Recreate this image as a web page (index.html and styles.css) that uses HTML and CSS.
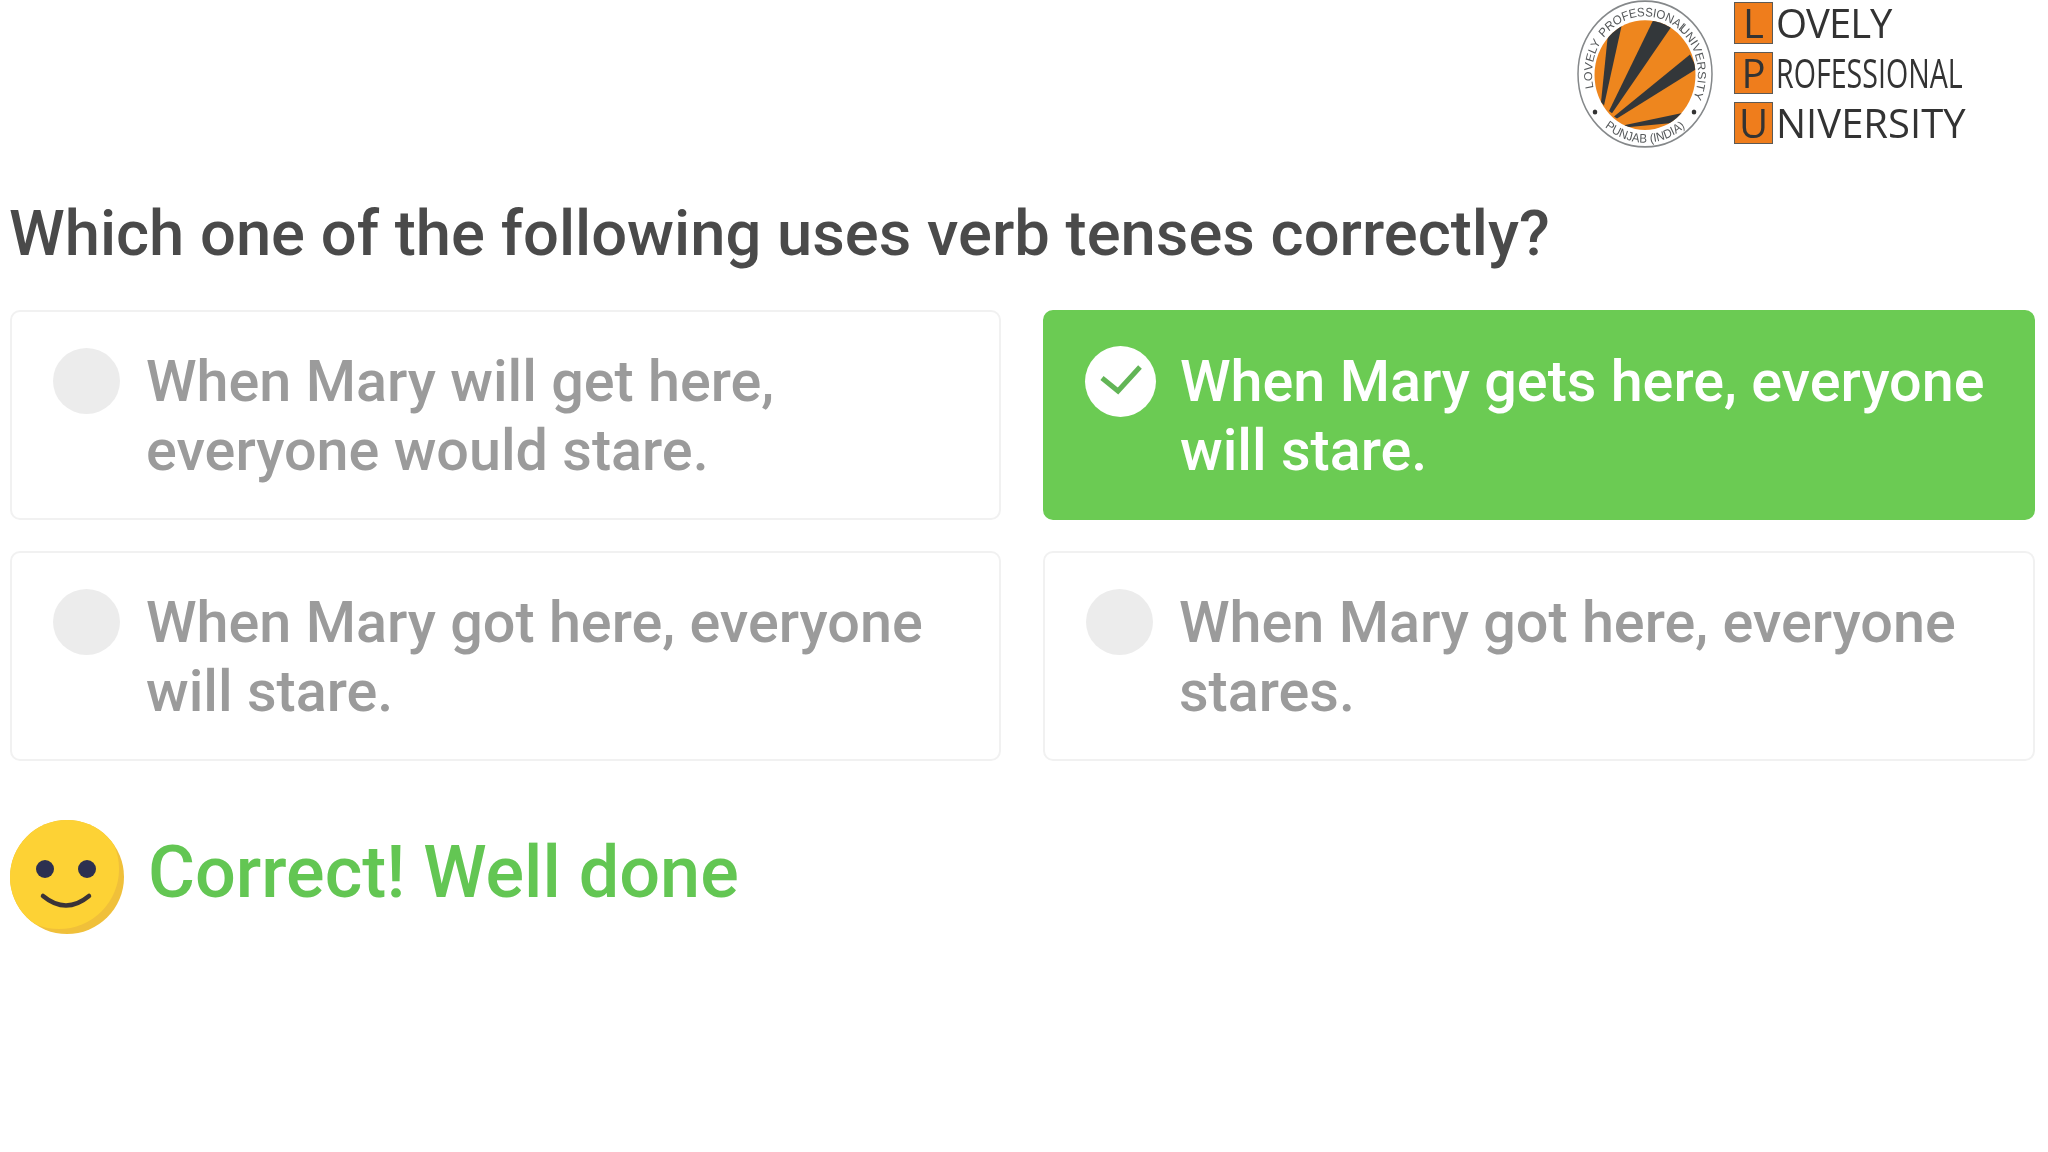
FILE: index.html
```html
<!DOCTYPE html>
<html lang="en">
<head>
<meta charset="utf-8">
<title>Quiz</title>
<link rel="stylesheet" href="styles.css">
</head>
<body>
<main class="page">
  <header class="brand">
    <svg class="seal" viewBox="0 0 136 136" width="136" height="148" preserveAspectRatio="none" aria-hidden="true">
      <defs>
        <path id="sealTop" d="M18.200 86.100 A53 53 0 1 1 108.600 102.100"/>
        <path id="sealBottom" d="M19.700 108.500 A63 63 0 0 0 116.300 108.500"/>
        <clipPath id="discClip"><circle cx="68" cy="69" r="50.500"/></clipPath>
      </defs>
      <circle cx="68" cy="68" r="67" fill="#fff" stroke="#85888a" stroke-width="1.500"/>
      <circle cx="68" cy="69" r="50.500" fill="#ee861e"/>
      <g clip-path="url(#discClip)" fill="#33373a">
        <path d="M32 22 L45 22 L27 97 L24 94Z"/>
        <path d="M77 17 L94 25 L35 104 L32 102Z"/>
        <path d="M113 50 L120 63 L40 109 L37 107Z"/>
        <path d="M110 103 L106 112 L50 117 L47 115Z"/>
      </g>
      <text class="seal-text"><textPath href="#sealTop" startOffset="12.500%" text-anchor="middle">LOVELY</textPath></text>
      <text class="seal-text"><textPath href="#sealTop" startOffset="44.600%" text-anchor="middle">PROFESSIONAL</textPath></text>
      <text class="seal-text"><textPath href="#sealTop" startOffset="78%" text-anchor="middle">UNIVERSITY</textPath></text>
      <text class="seal-text"><textPath href="#sealBottom" startOffset="50%" text-anchor="middle">PUNJAB (INDIA)</textPath></text>
      <circle cx="18" cy="103" r="2.300" fill="#333"/>
      <circle cx="117" cy="103" r="2.300" fill="#333"/>
    </svg>
    <div class="wordmark">
      <div class="word"><span class="initial">L</span><span class="rest rest-l">OVELY</span></div>
      <div class="word"><span class="initial">P</span><span class="rest rest-p">ROFESSIONAL</span></div>
      <div class="word"><span class="initial">U</span><span class="rest rest-u">NIVERSITY</span></div>
    </div>
  </header>

  <h1 class="question">Which one of the following uses verb tenses correctly?</h1>

  <section class="options">
    <div class="option"><span class="radio"></span><p class="label">When Mary will get here, everyone would stare.</p></div>
    <div class="option option-correct">
      <span class="radio radio-checked">
        <svg viewBox="0 0 71 71" width="71" height="71" aria-hidden="true"><path d="M17 32 L33 45 L55 21" fill="none" stroke="#62b556" stroke-width="5"/></svg>
      </span>
      <p class="label">When Mary gets here, everyone will stare.</p>
    </div>
    <div class="option"><span class="radio"></span><p class="label">When Mary got here, everyone will stare.</p></div>
    <div class="option"><span class="radio"></span><p class="label">When Mary got here, everyone stares.</p></div>
  </section>

  <section class="feedback">
    <svg class="smiley" viewBox="0 0 116 116" width="116" height="116" aria-hidden="true">
      <defs><clipPath id="faceClip"><circle cx="58" cy="58" r="57"/></clipPath></defs>
      <circle cx="58" cy="58" r="57" fill="#f0c03a"/>
      <circle cx="50" cy="50" r="60" fill="#fdd235" clip-path="url(#faceClip)"/>
      <circle cx="36" cy="50" r="9" fill="#2c3050"/>
      <circle cx="78" cy="50" r="9" fill="#2c3050"/>
      <path d="M34 77 Q57 96 80 77" fill="none" stroke="#3a3338" stroke-width="4.500" stroke-linecap="round"/>
    </svg>
    <span class="message">Correct! Well done</span>
  </section>
</main>
</body>
</html>
```
FILE: styles.css
```css
* { box-sizing: border-box; }
html, body { margin: 0; padding: 0; background: #fff; }
body { font-family: Roboto, "Noto Sans", sans-serif; width: 2048px; height: 1152px; overflow: hidden; }
.page { padding: 0 13px 0 10px; }

.brand { display: flex; justify-content: flex-end; align-items: flex-start; gap: 21px; padding-right: 63px; height: 151px; filter: blur(0.5px); }
.seal { flex: none; }
.seal-text { font-family: "Liberation Sans Narrow", "Liberation Sans", sans-serif; font-size: 11.500px; fill: #55585a; }

.wordmark { display: flex; flex-direction: column; gap: 8px; padding-top: 2px; width: 238px; }
.word { display: flex; align-items: center; height: 42px; }
.initial { flex: none; width: 39px; height: 42px; background: #ef7d1c; border: 1px solid #5c5a55; color: #333; font: 400 40px/40px "Open Sans", sans-serif; text-align: center; }
.rest { display: inline-block; font-family: "Open Sans", sans-serif; font-size: 40px; font-weight: 400; color: #333; line-height: 42px; white-space: nowrap; margin-left: 3px; transform-origin: left center; }
.rest-l { letter-spacing: -1px; }
.rest-p { transform: scaleX(0.715); }
.rest-u { letter-spacing: 0; }

.question { margin: 0 0 0 -1px; height: 159px; padding-top: 47px; font-size: 63.300px; line-height: 70px; font-weight: 500; color: #4a4a4a; white-space: nowrap; }

.options { display: grid; grid-template-columns: 991px 992px; column-gap: 42px; row-gap: 31px; }
.option { display: flex; align-items: flex-start; gap: 26px; height: 210px; padding: 35px 20px 0 41px; background: #fff; border: 2px solid #f1f1f1; border-radius: 10px; }
.option-correct { background: #6bcb53; border-color: #6bcb53; color: #fff; padding-left: 40px; gap: 24px; }
.radio { flex: none; display: block; width: 67px; height: 66px; margin-top: 1px; border-radius: 50%; background: #ececec; }
.radio-checked { width: 71px; height: 71px; margin-top: -1px; background: #fff; }
.radio-checked svg { display: block; }
.label { margin: 0; font-size: 57.500px; line-height: 69px; font-weight: 500; color: #9b9b9b; }
.option-correct .label { color: #fff; }

.feedback { display: flex; align-items: center; gap: 23px; margin-top: 58px; margin-left: -1px; }
.smiley { flex: none; }
.message { font-size: 72px; line-height: 80px; font-weight: 500; color: #63c653; margin-top: -8px; }
```
